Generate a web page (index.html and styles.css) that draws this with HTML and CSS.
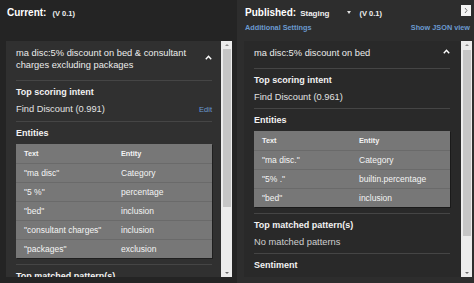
FILE: index.html
```html
<!DOCTYPE html>
<html>
<head>
<meta charset="utf-8">
<link rel="stylesheet" href="styles.css">
</head>
<body>
<div class="app">
  <section class="panel panel-current">
    <header class="head">
      <div class="head-line">
        <span class="title">Current:</span>
        <span class="ver">(V 0.1)</span>
      </div>
    </header>
    <div class="card">
      <div class="card-body">
        <div class="utter">
          <p class="utter-text">ma disc:5% discount on bed &amp; consultant charges excluding packages</p>
          <svg class="chev" width="7" height="5" viewBox="0 0 7 5"><polyline points="0.8,4.2 3.5,1.2 6.2,4.2" fill="none" stroke="#fff" stroke-width="1.4"/></svg>
        </div>
        <div class="sec">
          <h3 class="sec-title">Top scoring intent</h3>
          <div class="val"><span>Find Discount (0.991)</span><span class="edit">Edit</span></div>
        </div>
        <div class="sec sec-table">
          <h3 class="sec-title">Entities</h3>
          <table class="ent">
            <thead><tr><th class="c1">Text</th><th>Entity</th></tr></thead>
            <tbody>
              <tr><td>"ma disc"</td><td>Category</td></tr>
              <tr><td>"5 %"</td><td>percentage</td></tr>
              <tr><td>"bed"</td><td>inclusion</td></tr>
              <tr><td>"consultant charges"</td><td>inclusion</td></tr>
              <tr><td>"packages"</td><td>exclusion</td></tr>
            </tbody>
          </table>
        </div>
        <div class="sec sec-last">
          <h3 class="sec-title">Top matched pattern(s)</h3>
        </div>
      </div>
      <div class="scrollbar">
        <span class="arr arr-up"></span>
        <span class="track"><span class="thumb thumb-current"></span></span>
        <span class="arr arr-down"></span>
      </div>
    </div>
  </section>

  <section class="panel panel-published">
    <header class="head">
      <div class="head-line">
        <span class="title">Published:</span>
        <span class="stage">Staging</span>
        <span class="caret"></span>
        <span class="ver ver-pub">(V 0.1)</span>
        <span class="expand"><svg width="10" height="11" viewBox="0 0 10 11"><polyline points="4,3 6,5.5 4,8" fill="none" stroke="#777" stroke-width="1"/></svg></span>
      </div>
      <div class="head-sub">
        <span class="link">Additional Settings</span>
        <span class="link">Show JSON view</span>
      </div>
    </header>
    <div class="card">
      <div class="card-body">
        <div class="utter">
          <p class="utter-text">ma disc:5% discount on bed</p>
          <svg class="chev" width="7" height="5" viewBox="0 0 7 5"><polyline points="0.8,4.2 3.5,1.2 6.2,4.2" fill="none" stroke="#fff" stroke-width="1.4"/></svg>
        </div>
        <div class="sec">
          <h3 class="sec-title">Top scoring intent</h3>
          <div class="val"><span>Find Discount (0.961)</span></div>
        </div>
        <div class="sec sec-table">
          <h3 class="sec-title">Entities</h3>
          <table class="ent">
            <thead><tr><th class="c1">Text</th><th>Entity</th></tr></thead>
            <tbody>
              <tr><td>"ma disc."</td><td>Category</td></tr>
              <tr><td>"5% ."</td><td>builtin.percentage</td></tr>
              <tr><td>"bed"</td><td>inclusion</td></tr>
            </tbody>
          </table>
        </div>
        <div class="sec">
          <h3 class="sec-title">Top matched pattern(s)</h3>
          <div class="val val-muted">No matched patterns</div>
        </div>
        <div class="sec sec-last">
          <h3 class="sec-title">Sentiment</h3>
        </div>
      </div>
      <div class="scrollbar">
        <span class="arr arr-up"></span>
        <span class="track"><span class="thumb thumb-published"></span></span>
        <span class="arr arr-down"></span>
      </div>
    </div>
  </section>
</div>
</body>
</html>
```

FILE: styles.css
```css
* { box-sizing: border-box; margin: 0; padding: 0; }
html, body { width: 474px; height: 283px; overflow: hidden; }
body {
  background: #242424;
  font-family: "Liberation Sans", Arial, sans-serif;
  color: #e6e6e6;
}
.app {
  display: grid;
  grid-template-columns: 237px 237px;
  height: 283px;
}
.panel {
  display: flex;
  flex-direction: column;
  padding-left: 6px;
}
.panel-published {
  background: #2d2d2d;
  padding-left: 7px;
  padding-right: 2px;
}
.head {
  height: 41px;
  padding-top: 5px;
}
.head-line {
  display: flex;
  align-items: baseline;
  height: 15px;
  line-height: 15px;
  padding-left: 1px;
}
.title {
  font-size: 10px;
  font-weight: 700;
  color: #ffffff;
}
.ver {
  font-size: 7.5px;
  font-weight: 700;
  color: #f0f0f0;
  margin-left: 6px;
}
.ver-pub { margin-left: 8px; }
.stage {
  font-size: 8px;
  font-weight: 700;
  color: #f0f0f0;
  margin-left: 4px;
}
.caret {
  width: 0;
  height: 0;
  border-left: 2.5px solid transparent;
  border-right: 2.5px solid transparent;
  border-top: 3px solid #e0e0e0;
  margin-left: 18px;
  align-self: center;
  margin-top: -1px;
}
.expand {
  margin-left: auto;
  margin-right: 1px;
  width: 10px;
  height: 11px;
  background: #f4f4f4;
  align-self: flex-start;
  display: flex;
}
.head-sub {
  display: flex;
  justify-content: space-between;
  line-height: 11px;
  margin-top: 2px;
  padding-left: 1px;
  padding-right: 2px;
}
.link {
  color: #6b9ad0;
  font-size: 7.3px;
  font-weight: 700;
}
.card {
  display: flex;
  height: 236px;
  width: 226px;
  background: #303030;
}
.panel-published .card {
  width: 228px;
  background: #292929;
}
.card-body {
  flex: 1;
  overflow: hidden;
  padding: 0 9px 0 10px;
}
.panel-published .card-body { padding-right: 11px; }
.utter {
  display: flex;
  align-items: center;
  justify-content: space-between;
  padding: 6px 0 9px;
  border-bottom: 1px solid #454545;
}
.utter-text {
  width: 185px;
  font-size: 9.3px;
  line-height: 12px;
  color: #ececec;
}
.chev { flex: none; margin-bottom: 3px; }
.sec {
  padding: 4px 0 4px;
  border-bottom: 1px solid #454545;
}
.sec-table { padding-bottom: 6px; }
.sec-last { border-bottom: 0; }
.sec-title {
  font-size: 9px;
  line-height: 14px;
  font-weight: 700;
  color: #f2f2f2;
}
.val {
  display: flex;
  justify-content: space-between;
  align-items: baseline;
  margin-top: 3px;
  font-size: 9.3px;
  line-height: 14px;
  color: #e2e2e2;
}
.val-muted { color: #cfcfcf; }
.edit {
  font-size: 7.5px;
  color: #6b9ad0;
}
.ent {
  margin-top: 4px;
  width: 100%;
  border-collapse: collapse;
  background: #777777;
  box-shadow: 1px 1px 0 rgba(0, 0, 0, 0.35);
  color: #f4f4f4;
}
.ent th {
  height: 19px;
  text-align: left;
  font-size: 7.3px;
  font-weight: 700;
  padding-left: 8px;
}
.ent th.c1 { width: 97px; }
.ent td {
  height: 19px;
  font-size: 8.5px;
  padding-left: 8px;
  border-top: 1px solid #6a6a6a;
  white-space: nowrap;
}
.scrollbar {
  width: 11px;
  flex: none;
  display: flex;
  flex-direction: column;
  align-items: stretch;
  background: #ececec;
}
.arr {
  height: 8px;
  flex: none;
  display: flex;
  justify-content: center;
  align-items: center;
}
.arr::before {
  content: "";
  width: 0;
  height: 0;
  border-left: 2px solid transparent;
  border-right: 2px solid transparent;
}
.arr-up::before { border-bottom: 2px solid #8a8a8a; }
.arr-down::before { border-top: 2px solid #6a6a6a; }
.track {
  flex: 1;
  display: block;
  padding: 0 1px 0 2px;
}
.thumb {
  display: block;
  background: #c6c6c6;
}
.thumb-current { margin-top: 0; height: 158px; }
.thumb-published { margin-top: 1px; height: 186px; }
```
